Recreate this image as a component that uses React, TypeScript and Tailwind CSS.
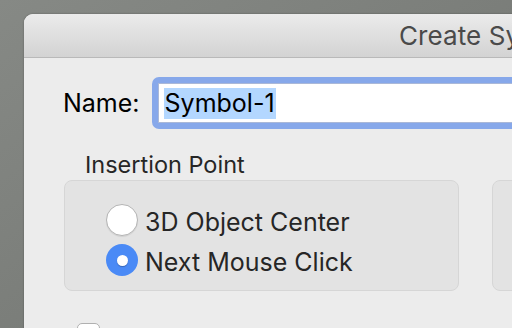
import React from "react";

export default function App() {
  const font = { fontFamily: "Inter, 'Noto Sans', sans-serif" };
  return (
    <div
      className="w-[512px] h-[328px] overflow-hidden bg-gradient-to-br from-[#868985] via-[#7b7e7a] to-[#6e716d] pl-[24px] pt-[14px]"
      style={font}
    >
      <div className="w-[600px] h-[400px] rounded-tl-[9px] overflow-hidden bg-[#ececec] shadow-[0_0_2px_rgba(0,0,0,0.35)]">
        {/* Title bar */}
        <div className="h-[44px] bg-gradient-to-b from-[#ebebeb] to-[#d3d3d3] border-b border-[#b9b9b9] flex items-center pl-[375px]">
          <span className="text-[26px] text-[#4a4a4a] leading-none tracking-[0.1px] whitespace-nowrap">
            Create Symbol
          </span>
        </div>
        {/* Name row */}
        <div className="flex items-center mt-[19px] ml-[39px]">
          <span className="text-[25px] text-black leading-none">Name:</span>
          <div className="ml-[12px] w-[420px] h-[52px] shrink-0 rounded-[7px] bg-[#87a8ea] p-[6px]">
            <div className="w-full h-full bg-white border border-[#aab8d8] flex items-center pl-[5px]">
              <span className="bg-[#b3d7ff] text-[25px] text-black leading-[31px] h-[31px] px-[1px]">
                Symbol-1
              </span>
            </div>
          </div>
        </div>
        {/* Insertion point */}
        <div className="mt-[23px] ml-[61px] text-[23.5px] leading-[26px] text-[#262626] whitespace-nowrap">
          Insertion Point
        </div>
        <div className="flex mt-[2px] ml-[40px] gap-[33px]">
          <div className="w-[395px] h-[111px] shrink-0 rounded-[8px] bg-[#e3e3e3] border border-[#d6d6d6] pl-[41px] pt-[23px] flex flex-col gap-[8px]">
            <div className="flex items-center h-[32px]">
              <div className="w-[32px] h-[32px] shrink-0 rounded-full bg-white border border-[#b4b4b4] shadow-[0_1px_1px_rgba(0,0,0,0.08)]" />
              <span className="ml-[7px] mt-[4px] text-[25px] text-[#262626] leading-none whitespace-nowrap">3D Object Center</span>
            </div>
            <div className="flex items-center h-[32px]">
              <div className="w-[32px] h-[32px] shrink-0 rounded-full bg-[#4a8af6] flex items-center justify-center">
                <div className="w-[11px] h-[11px] rounded-full bg-white shadow-[0_1px_1px_rgba(0,0,0,0.25)]" />
              </div>
              <span className="ml-[7px] mt-[4px] text-[25px] text-[#262626] leading-none whitespace-nowrap">Next Mouse Click</span>
            </div>
          </div>
          <div className="w-[200px] h-[111px] shrink-0 rounded-[8px] bg-[#e3e3e3] border border-[#d6d6d6]" />
        </div>
        {/* Checkbox row */}
        <div className="mt-[32px] ml-[53px] w-[23px] h-[23px] rounded-[5px] bg-white border border-[#b0b0b0]" />
      </div>
    </div>
  );
}
